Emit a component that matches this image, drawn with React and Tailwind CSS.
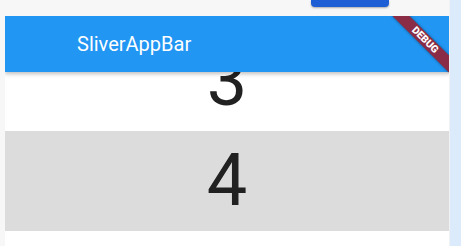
const rows = [
  { n: "3", bg: "bg-white" },
  { n: "4", bg: "bg-[#dcdcdc]" },
  { n: "", bg: "bg-white" },
];

export default function App() {
  return (
    <div className="w-[474px] h-[246px] flex overflow-hidden bg-white font-['Roboto',sans-serif]">
      {/* preview frame */}
      <div className="w-[449px] h-full flex flex-col bg-[#f7f7f7] pl-[5px]">
        <div className="h-4 shrink-0 pl-[306px]">
          <div className="w-[78px] h-[7px] rounded-b-[4px] bg-[#1f5fd6] shadow-[0_1px_2px_rgba(0,0,0,0.3)]" />
        </div>

        <div className="relative flex-1 overflow-hidden bg-white">
          {/* pinned app bar */}
          <div className="relative z-10 h-14 flex items-center pl-[72px] bg-[#2196f3] shadow-[0_2px_4px_rgba(0,0,0,0.25)]">
            <span className="text-[20px] leading-normal text-white">SliverAppBar</span>
          </div>

          {/* list scrolled under the bar */}
          <div className="-mt-[41px] flex flex-col">
            {rows.map((r, i) => (
              <div key={i} className={`h-[100px] flex items-center justify-center ${r.bg}`}>
                {r.n && (
                  <span className="text-[72px] leading-normal font-normal text-[#212121]">{r.n}</span>
                )}
              </div>
            ))}
          </div>

          {/* debug banner */}
          <div className="absolute top-0 right-0 w-0 h-0 z-20 origin-top-left rotate-45">
            <div className="absolute left-[-40px] top-[28px] w-[80px] h-[12px] flex items-center justify-center bg-[#8a2c46] shadow-[0_0_3px_rgba(0,0,0,0.45)]">
              <span className="text-[10.2px] leading-none font-black text-white">DEBUG</span>
            </div>
          </div>
        </div>
      </div>

      <div className="w-px h-full bg-[#f2f2f2]" />
      <div className="w-[11px] h-full bg-[#dcebfb]" />
      <div className="flex-1 h-full bg-white" />
    </div>
  );
}
